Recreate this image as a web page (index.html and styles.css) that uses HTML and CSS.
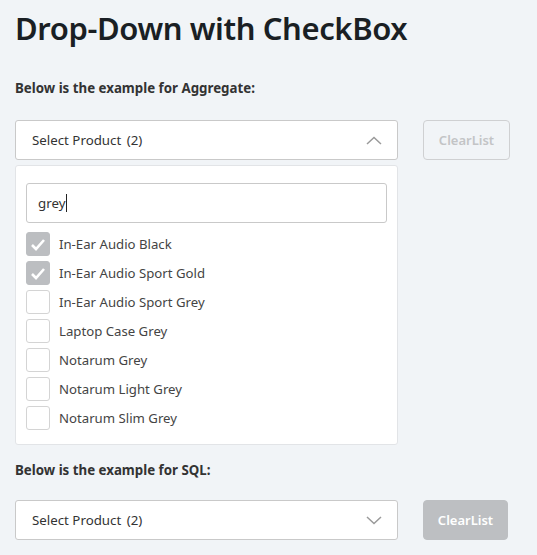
FILE: index.html
```html
<!DOCTYPE html>
<html>
<head>
<meta charset="utf-8">
<link rel="stylesheet" href="styles.css">
</head>
<body>
<div class="page">
  <h1 class="title">Drop-Down with CheckBox</h1>
  <p class="label first">Below is the example for Aggregate:</p>
  <div class="row">
    <div class="select">
      <span class="select-text">Select Product <span class="count">(2)</span></span>
      <svg class="chev" width="16" height="9" viewBox="0 0 16 9"><path d="M1 8 L8 1.5 L15 8" fill="none" stroke="#9a9a9a" stroke-width="1.5"/></svg>
    </div>
    <button class="btn btn-outline">ClearList</button>
  </div>
  <div class="panel">
    <div class="search">grey<span class="caret"></span></div>
    <ul class="list">
      <li class="item"><span class="box checked"><svg width="16" height="13" viewBox="0 0 16 13"><path d="M2 7 L6 11 L14 2" fill="none" stroke="#fff" stroke-width="2.6"/></svg></span>In-Ear Audio Black</li>
      <li class="item"><span class="box checked"><svg width="16" height="13" viewBox="0 0 16 13"><path d="M2 7 L6 11 L14 2" fill="none" stroke="#fff" stroke-width="2.6"/></svg></span>In-Ear Audio Sport Gold</li>
      <li class="item"><span class="box"></span>In-Ear Audio Sport Grey</li>
      <li class="item"><span class="box"></span>Laptop Case Grey</li>
      <li class="item"><span class="box"></span>Notarum Grey</li>
      <li class="item"><span class="box"></span>Notarum Light Grey</li>
      <li class="item"><span class="box"></span>Notarum Slim Grey</li>
    </ul>
  </div>
  <p class="label second">Below is the example for SQL:</p>
  <div class="row">
    <div class="select">
      <span class="select-text">Select Product <span class="count">(2)</span></span>
      <svg class="chev" width="16" height="9" viewBox="0 0 16 9"><path d="M1 1 L8 7.5 L15 1" fill="none" stroke="#9a9a9a" stroke-width="1.5"/></svg>
    </div>
    <button class="btn btn-filled">ClearList</button>
  </div>
</div>
</body>
</html>
```

FILE: styles.css
```css
html, body {
  margin: 0;
  padding: 0;
  background: #f1f4f7;
}
body {
  font-family: "Noto Sans", "Open Sans", sans-serif;
  color: #333;
}
.page {
  padding: 0 15px;
}
.title {
  margin: 8px 0 0;
  font-size: 31px;
  line-height: 40px;
  font-weight: 600;
  letter-spacing: -0.4px;
  color: #1a1f24;
}
.label {
  margin: 0;
  font-size: 13.3px;
  line-height: 18px;
  font-weight: 700;
  color: #333;
}
.label.first {
  margin-top: 31px;
  margin-bottom: 23px;
}
.label.second {
  margin-top: 16px;
  margin-bottom: 21px;
}
.row {
  display: flex;
  align-items: flex-start;
  gap: 25px;
}
.select {
  box-sizing: border-box;
  width: 383px;
  height: 40px;
  background: #fff;
  border: 1px solid #c9c9c9;
  border-radius: 3px;
  display: flex;
  align-items: center;
  justify-content: space-between;
  padding: 0 15px 0 16px;
  font-size: 13.3px;
  color: #333;
}
.count {
  margin-left: 2px;
}
.btn {
  box-sizing: border-box;
  height: 40px;
  width: 87px;
  border-radius: 4px;
  font-family: inherit;
  font-size: 13px;
  font-weight: 600;
  padding: 0;
}
.btn-outline {
  background: transparent;
  border: 1px solid #cfd0d2;
  color: #c3c4c6;
}
.btn-filled {
  width: 85px;
  background: #bdbfc2;
  border: 1px solid #bdbfc2;
  color: #fff;
}
.panel {
  box-sizing: border-box;
  width: 383px;
  margin-top: 5px;
  height: 280px;
  background: #fff;
  border: 1px solid #e2e4e7;
  border-radius: 3px;
  padding: 17px 10px 0;
}
.search {
  box-sizing: border-box;
  height: 40px;
  border: 1px solid #c9c9c9;
  border-radius: 3px;
  padding: 0 11px;
  display: flex;
  align-items: center;
  font-size: 13.3px;
  color: #333;
}
.caret {
  display: inline-block;
  width: 1px;
  height: 18px;
  background: #222;
  margin-left: 1px;
}
.list {
  list-style: none;
  margin: 9px 0 0;
  padding: 0;
  display: flex;
  flex-direction: column;
  gap: 5px;
}
.item {
  display: flex;
  align-items: center;
  height: 24px;
  font-size: 13.2px;
  color: #444;
}
.box {
  box-sizing: border-box;
  width: 24px;
  height: 24px;
  border: 1px solid #d4d4d4;
  border-radius: 3px;
  background: #fff;
  margin-right: 9px;
  display: flex;
  align-items: center;
  justify-content: center;
  flex: none;
}
.box.checked {
  background: #bcbec1;
  border-color: #bcbec1;
}
```
